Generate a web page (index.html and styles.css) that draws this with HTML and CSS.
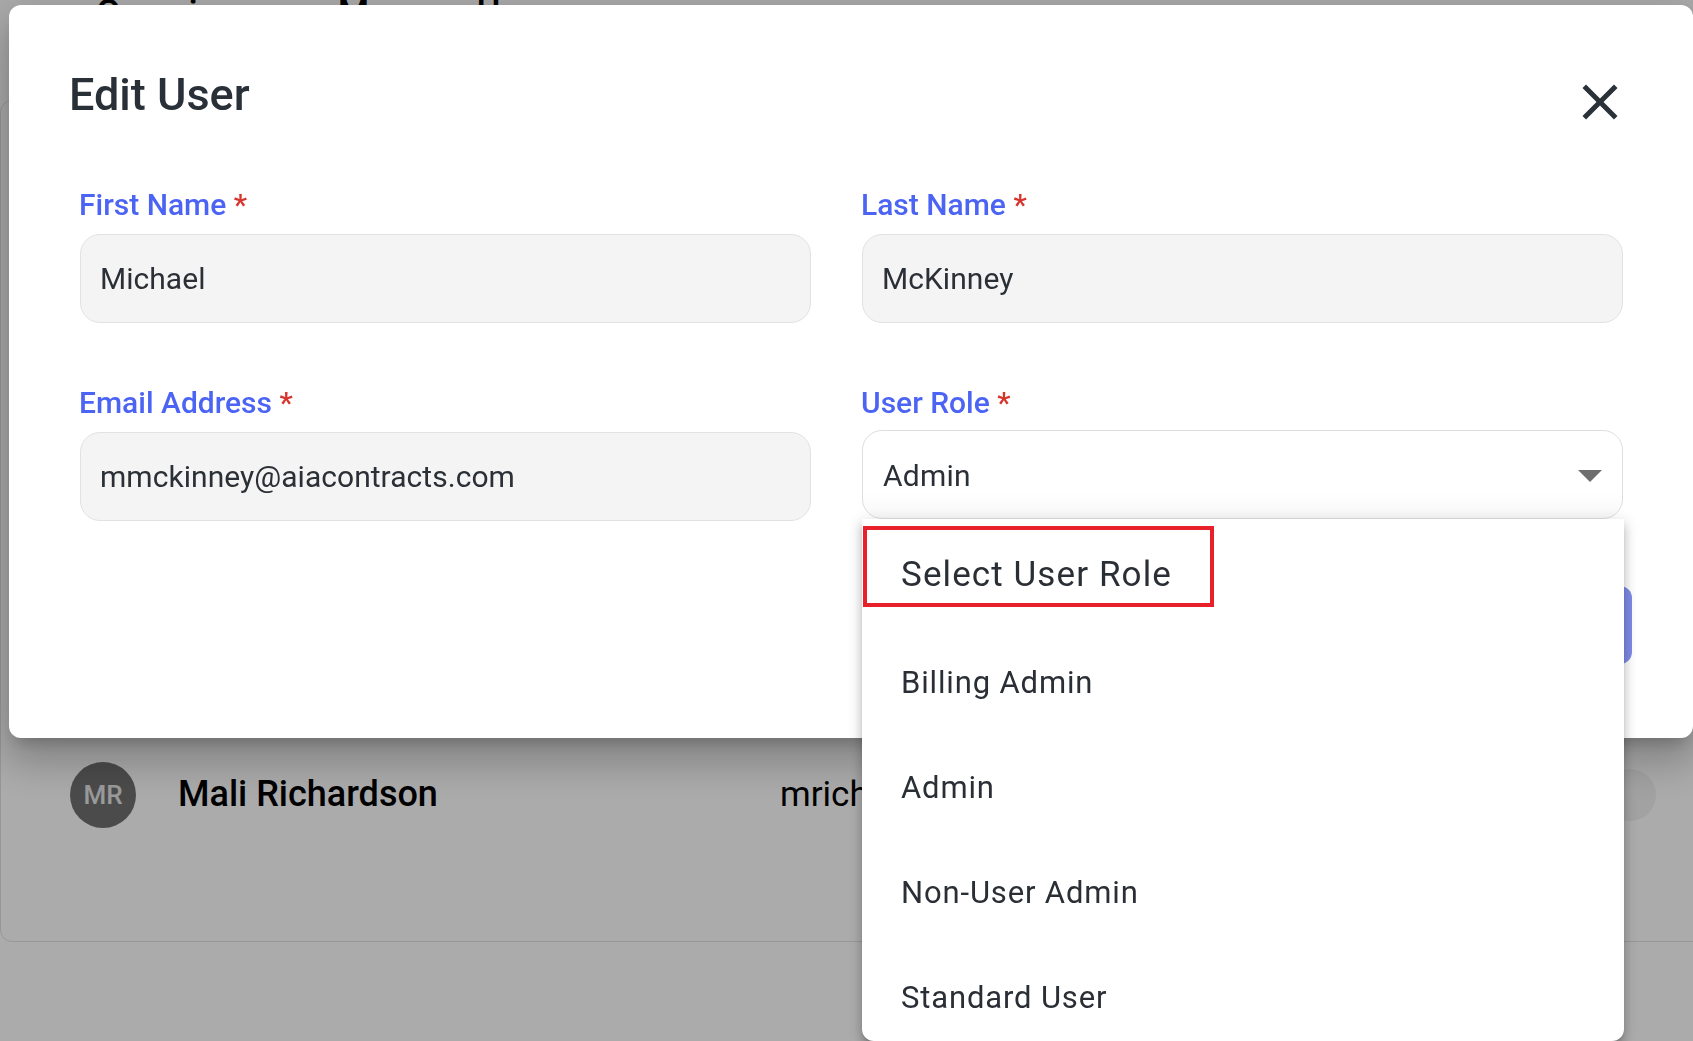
FILE: index.html
```html
<!DOCTYPE html>
<html>
<head>
  <meta charset="UTF-8">
  <title>Edit User</title>
  <link rel="stylesheet" href="styles.css">
</head>
<body>
  <div class="tabs">
    <span class="tab">Overview</span>
    <span class="tab">Manage Users</span>
  </div>
  <div class="card">
    <div class="user-row">
      <span class="avatar">MR</span>
      <span class="user-name">Mali Richardson</span>
      <span class="user-email">mrichardson@aiacontracts.com</span>
      <span class="row-action"></span>
    </div>
  </div>

  <div class="backdrop"></div>

  <div class="dialog">
    <div class="dialog-header">
      <h2 class="dialog-title">Edit User</h2>
      <button class="close-btn" aria-label="Close">
        <svg width="60" height="60" viewBox="0 0 24 24"><path d="M19 6.41 17.59 5 12 10.59 6.41 5 5 6.41 10.59 12 5 17.59 6.41 19 12 13.41 17.59 19 19 17.59 13.41 12z"/></svg>
      </button>
    </div>

    <form class="form">
      <div class="field">
        <label class="label">First Name <span class="req">*</span></label>
        <input class="input" value="Michael">
      </div>
      <div class="field">
        <label class="label">Last Name <span class="req">*</span></label>
        <input class="input" value="McKinney">
      </div>
      <div class="field">
        <label class="label">Email Address <span class="req">*</span></label>
        <input class="input" value="mmckinney@aiacontracts.com">
      </div>
      <div class="field role">
        <label class="label">User Role <span class="req">*</span></label>
        <div class="select">
          <span>Admin</span>
          <span class="caret"></span>
          <ul class="menu">
            <li class="menu-head">Select User Role</li>
            <li class="menu-item">Billing Admin</li>
            <li class="menu-item">Admin</li>
            <li class="menu-item">Non-User Admin</li>
            <li class="menu-item">Standard User</li>
          </ul>
        </div>
      </div>
    </form>

    <div class="actions">
      <button class="save-btn">Save</button>
    </div>
  </div>
</body>
</html>
```

FILE: styles.css
```css
body {
  margin: 0;
  height: 1041px;
  overflow: hidden;
  background: #fff;
  font-family: Roboto, "Noto Sans", sans-serif;
}

/* page behind the dialog */
.tabs {
  display: flex;
  gap: 94px;
  margin-top: -5px;
  height: 90px;
  padding-left: 96px;
  font-size: 36px;
  font-weight: 500;
  line-height: 1;
  color: #000;
}
.card {
  margin-top: 15px;
  width: calc(100% + 30px);
  height: 842px;
  box-sizing: border-box;
  display: flex;
  align-items: flex-end;
  background: #fff;
  border: 1px solid #e2e2e2;
  border-radius: 12px;
}
.user-row {
  display: flex;
  align-items: center;
  width: 100%;
  padding: 0 0 113px 69px;
}
.avatar {
  flex-shrink: 0;
  width: 66px;
  height: 66px;
  border-radius: 50%;
  display: flex;
  align-items: center;
  justify-content: center;
  background: #717171;
  color: #e6e6e6;
  font-size: 26px;
  font-weight: 500;
}
.user-name {
  margin-left: 42px;
  width: 602px;
  font-size: 36px;
  font-weight: 500;
  line-height: 1.2;
  color: #000;
}
.user-email {
  flex: 1;
  font-size: 35px;
  line-height: 1.2;
  color: #000;
}
.row-action {
  flex-shrink: 0;
  width: 52px;
  height: 52px;
  margin-right: 66px;
  border-radius: 50%;
  background: #f2f2f2;
}

.backdrop {
  position: fixed;
  inset: 0;
  background: rgba(0, 0, 0, 0.33);
}

/* dialog */
.dialog {
  position: absolute;
  top: 5px;
  left: 9px;
  width: 1684px;
  background: #fff;
  border-radius: 12px;
  box-shadow: 0 11px 15px -7px rgba(0,0,0,.2), 0 24px 38px 3px rgba(0,0,0,.14), 0 9px 46px 8px rgba(0,0,0,.12);
}
.dialog-header {
  display: flex;
  justify-content: space-between;
  align-items: flex-start;
  padding: 67px 63px 0 60px;
}
.dialog-title {
  margin: 0;
  font-size: 45px;
  font-weight: 500;
  line-height: 1;
  color: #2a3038;
}
.close-btn {
  width: 60px;
  height: 60px;
  padding: 0;
  border: none;
  background: none;
  fill: #2b3138;
  cursor: pointer;
}
.close-btn svg {
  display: block;
}

.form {
  display: grid;
  grid-template-columns: 731px 761px;
  column-gap: 51px;
  row-gap: 65px;
  margin: 0;
  padding: 58px 0 0 71px;
}
.label {
  display: block;
  margin-bottom: 14px;
  margin-left: -1px;
  font-size: 30px;
  font-weight: 500;
  line-height: 1;
  color: #4c64f4;
}
.req {
  color: #d6342c;
}
.input {
  display: block;
  width: 100%;
  height: 89px;
  box-sizing: border-box;
  padding: 0 19px;
  border: 1px solid #e2e2e2;
  border-radius: 20px;
  background: #f4f4f4;
  font-family: Roboto, "Noto Sans", sans-serif;
  font-size: 30px;
  letter-spacing: 0.04px;
  color: #2b3036;
  outline: none;
}
.role .label {
  margin-bottom: 12px;
}
.select {
  position: relative;
  height: 89px;
  box-sizing: border-box;
  display: flex;
  align-items: center;
  justify-content: space-between;
  padding: 2px 20px 0;
  border: 1px solid #dedede;
  border-radius: 20px;
  background: linear-gradient(#fff 70%, #f8f8f8);
  font-size: 30px;
  letter-spacing: 0.2px;
  color: #2b3036;
}
.caret {
  margin-top: 1px;
  width: 0;
  height: 0;
  border-left: 12px solid transparent;
  border-right: 12px solid transparent;
  border-top: 12px solid #6e6e6e;
}

.menu {
  position: absolute;
  top: calc(100% + 1px);
  left: -1px;
  z-index: 1;
  width: 762px;
  height: 522px;
  box-sizing: border-box;
  margin: 0;
  padding: 7px 0 0;
  list-style: none;
  overflow: hidden;
  background: #fff;
  border-radius: 0 0 12px 12px;
  box-shadow: 0 5px 5px -3px rgba(0,0,0,.2), 0 8px 10px 1px rgba(0,0,0,.14), 0 3px 14px 2px rgba(0,0,0,.12);
  color: #2a2f36;
}
.menu-head {
  width: 351px;
  box-sizing: border-box;
  margin: 0 0 23px 1px;
  padding: 27px 0 11px 34px;
  border: 4px solid #e8202a;
  font-size: 35px;
  line-height: 1;
  letter-spacing: 1.1px;
  white-space: nowrap;
}
.menu-item {
  height: 105px;
  padding-left: 39px;
  font-size: 31px;
  line-height: 105px;
  letter-spacing: 0.85px;
}

.actions {
  display: flex;
  justify-content: flex-end;
  padding: 65px 61px 74px 0;
}
.save-btn {
  width: 230px;
  height: 78px;
  border: none;
  border-radius: 12px;
  background: #7f8ce8;
  color: #fff;
  font-family: Roboto, "Noto Sans", sans-serif;
  font-size: 28px;
  font-weight: 500;
}
```
